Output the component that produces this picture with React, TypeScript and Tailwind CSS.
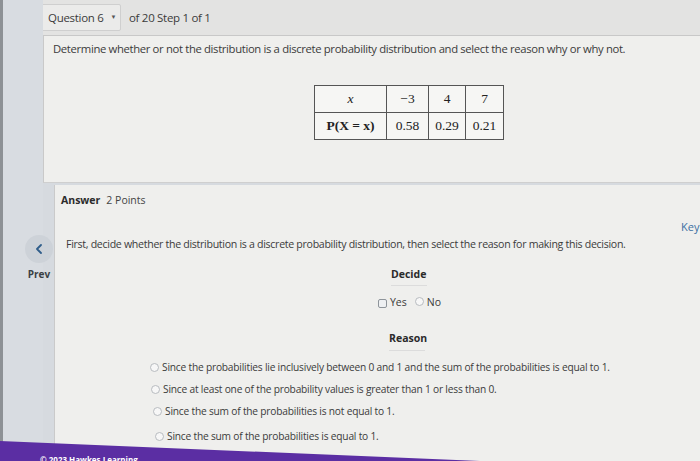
import React from 'react';

const options = [
  { text: 'Since the probabilities lie inclusively between 0 and 1 and the sum of the probabilities is equal to 1.', ml: 'ml-[0px]' },
  { text: 'Since at least one of the probability values is greater than 1 or less than 0.', ml: 'ml-[1px]' },
  { text: 'Since the sum of the probabilities is not equal to 1.', ml: 'ml-[3px]' },
  { text: 'Since the sum of the probabilities is equal to 1.', ml: 'ml-[5px] mt-[3px]' },
];

const Radio = () => (
  <span className="inline-block w-[9px] h-[9px] rounded-full border border-[#b8bcc0] bg-[#f7f7f7] shrink-0" />
);

export default function App() {
  return (
    <div className="relative w-[700px] h-[461px] overflow-hidden flex flex-col bg-[#d6dadf] text-[#3b3b3b] font-['Open_Sans',sans-serif]">
      <div className="flex flex-1 min-h-0">
        <div className="w-[3px] bg-[#8d9195]" />

        {/* sidebar */}
        <div className="relative z-10 w-[40px] bg-[#d8dce1]">
          <div className="mt-[235px] ml-[20px] w-[32px] flex flex-col items-center">
            <div className="w-[28px] h-[28px] rounded-full bg-[#cdd2d8] flex items-center justify-center">
              <svg width="8" height="10" viewBox="0 0 8 10" fill="none">
                <path d="M6 1 L2 5 L6 9" stroke="#2f5d8a" strokeWidth="1.8" strokeLinecap="round" strokeLinejoin="round" />
              </svg>
            </div>
            <div className="mt-[6px] text-[10px] font-bold text-[#3a3f44] leading-none">Prev</div>
          </div>
        </div>

        {/* main */}
        <div className="flex-1 flex flex-col min-w-0">
          <div className="h-[36px] bg-[#e3e3e2] border-b border-[#c8c8c8] flex items-center shrink-0">
            <div className="ml-[-5px] h-[27px] w-[83px] bg-[#ebebea] border border-[#cfcfcf] rounded-[2px] flex items-center pl-[9px] text-[11.5px] tracking-[-0.3px] whitespace-nowrap">
              Question 6
              <span className="ml-[7px] text-[6px] text-[#555]">▼</span>
            </div>
            <div className="ml-[8px] text-[11.5px] tracking-[-0.3px] whitespace-nowrap">of 20 Step 1 of 1</div>
          </div>

          <div className="h-[147px] bg-[#efefed] border-l border-[#c9c9c9] border-b border-b-[#cfcfcf] shrink-0 pt-[5px] pl-[9px]">
            <div className="text-[11.3px] tracking-[-0.35px] whitespace-nowrap">
              Determine whether or not the distribution is a discrete probability distribution and select the reason why or why not.
            </div>
            <div className="mt-[27px] ml-[261px] font-['Liberation_Serif',serif] text-[13.5px] text-[#222]">
              <table className="border-collapse bg-[#f6f6f4]">
                <tbody>
                  <tr className="h-[27px]">
                    <td className="border border-[#555] w-[72px] text-center italic">x</td>
                    <td className="border border-[#555] w-[42px] text-center">−3</td>
                    <td className="border border-[#555] w-[37px] text-center">4</td>
                    <td className="border border-[#555] w-[38px] text-center">7</td>
                  </tr>
                  <tr className="h-[27px]">
                    <td className="border border-[#555] text-center font-bold">P(X = x)</td>
                    <td className="border border-[#555] text-center">0.58</td>
                    <td className="border border-[#555] text-center">0.29</td>
                    <td className="border border-[#555] text-center">0.21</td>
                  </tr>
                </tbody>
              </table>
            </div>
          </div>

          <div className="flex-1 ml-[11px] mt-[2px] bg-[#efefed] border-l border-[#cacaca] relative">
            <div className="pt-[8px] pl-[6px] flex items-baseline text-[10.5px]">
              <span className="font-bold text-[#2b2b2b]">Answer</span>
              <span className="ml-[6px] text-[#444]">2 Points</span>
            </div>
            <div className="absolute left-[626px] top-[34px] text-[11px] text-[#3e6fa3] whitespace-nowrap">Keyboard</div>
            <div className="mt-[28px] pl-[11px] text-[10.6px] tracking-[-0.3px] whitespace-nowrap">
              First, decide whether the distribution is a discrete probability distribution, then select the reason for making this decision.
            </div>

            <div className="mt-[14px] ml-[336px] w-[36px] border-b border-[#dcdcdc] pb-[3px] text-[10.5px] font-bold text-[#2a2a2a]">
              Decide
            </div>
            <div className="mt-[9px] ml-[323px] flex items-center text-[10.5px]">
              <span className="inline-block w-[9px] h-[9px] rounded-[2px] border border-[#8e949a] bg-[#eef0f2]" />
              <span className="ml-[3px]">Yes</span>
              <span className="ml-[8px]"><Radio /></span>
              <span className="ml-[3px]">No</span>
            </div>

            <div className="mt-[20px] ml-[334px] w-[36px] border-b border-[#dcdcdc] pb-[3px] text-[10.5px] font-bold text-[#2a2a2a]">
              Reason
            </div>
            <div className="mt-[10px] ml-[95px] flex flex-col gap-[8px] text-[10.2px] tracking-[-0.2px]">
              {options.map((o) => (
                <div key={o.text} className={`flex items-center gap-[3px] h-[14px] whitespace-nowrap ${o.ml}`}>
                  <Radio />
                  <span>{o.text}</span>
                </div>
              ))}
            </div>
          </div>
        </div>
      </div>

      {/* footer */}
      <div className="absolute z-20 left-0 bottom-0 h-[20px] w-[480px] bg-[#5b2ea3] [clip-path:polygon(0_0,100%_100%,0_100%)]">
        <div className="absolute left-[40px] top-[13px] text-[8px] font-bold text-white whitespace-nowrap">© 2023 Hawkes Learning</div>
      </div>
    </div>
  );
}
